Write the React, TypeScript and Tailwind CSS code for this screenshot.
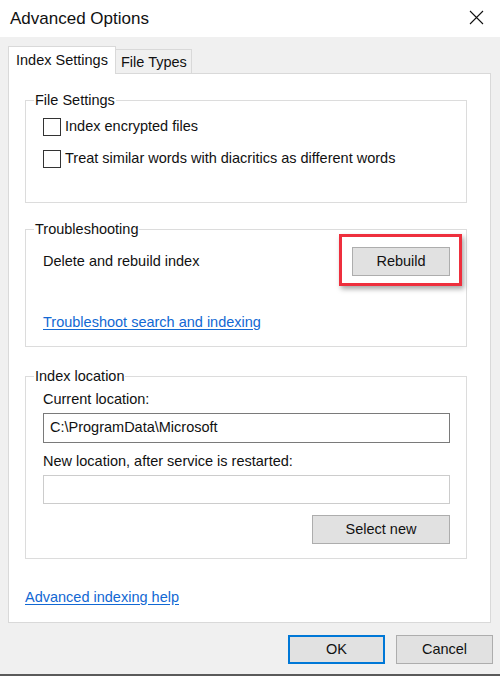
import type { ReactNode } from 'react'

const font = { fontFamily: '"Liberation Sans", Arial, sans-serif' }

const Group = ({ title, children }: { title: string; children: ReactNode }) => {
    return (
        <fieldset className="w-[442px] border border-[#dcdcdc] p-0 m-0">
            <legend className="ml-[8px] px-[1px] leading-[18px] text-[14.5px] text-[#111]">{title}</legend>
            <div className="pl-[17px] pr-[16px]">{children}</div>
        </fieldset>
    )
}

const Check = ({ label }: { label: string }) => {
    return (
        <label className="flex items-center h-[22px] gap-[4px]">
            <span className="w-[18px] h-[18px] border border-[#333] bg-white shrink-0" />
            <span className="text-[14.5px] text-[#111]">{label}</span>
        </label>
    )
}

const WinButton = ({ label, className = '' }: { label: string; className?: string }) => {
    return (
        <button className={`w-[98px] h-[29px] bg-[#e1e1e1] border border-[#adadad] text-[14.5px] text-[#111] ${className}`}>
            {label}
        </button>
    )
}

export default function App() {
    return (
        <div style={font} className="w-[500px] h-[676px] bg-[#f0f0f0] flex flex-col border-b-2 border-[#5a5a5a] overflow-hidden">
            {/* title bar */}
            <div className="h-[37px] bg-white flex items-center justify-between pl-[10px] pr-[16px] shrink-0">
                <span className="text-[17px] text-[#111]">Advanced Options</span>
                <svg width="15" height="15" viewBox="0 0 15 15" className="mt-[-2px]">
                    <path d="M1 1 L14 14 M14 1 L1 14" stroke="#111" strokeWidth="1.1" fill="none" />
                </svg>
            </div>

            <div className="pl-[8px] pr-[9px] pt-[9px]">
                {/* tabs */}
                <div className="flex items-end h-[27px]">
                    <div className="relative z-10 w-[108px] h-[28px] -mb-px bg-white border-t border-l border-r border-[#d9d9d9] flex items-center pl-[7px] text-[14.5px] text-[#111]">
                        Index Settings
                    </div>
                    <div className="w-[76px] h-[24px] bg-[#f0f0f0] border-t border-r border-[#d9d9d9] flex items-center pl-[5px] pt-[2px] text-[14.5px] text-[#111]">
                        File Types
                    </div>
                </div>

                {/* panel */}
                <div className="h-[550px] bg-white border border-[#d9d9d9] pl-[16px] flex flex-col">
                    <div className="mt-[17px]">
                        <Group title="File Settings">
                            <div className="pt-[7px] pb-[32px] flex flex-col gap-[10px]">
                                <Check label="Index encrypted files" />
                                <Check label="Treat similar words with diacritics as different words" />
                            </div>
                        </Group>
                    </div>

                    <div className="mt-[17px]">
                        <Group title="Troubleshooting">
                            <div className="pt-[9px] pb-[13px]">
                                <div className="flex items-center justify-between h-[29px]">
                                    <span className="text-[14.5px] text-[#111]">Delete and rebuild index</span>
                                    <div className="relative">
                                        <span className="absolute -left-[13px] -right-[12px] -top-[13px] -bottom-[10px] border-[3px] border-[#ee2f3d] shadow-[2px_3px_5px_rgba(0,0,0,0.35)]" />
                                        <WinButton label="Rebuild" />
                                    </div>
                                </div>
                                <div className="mt-[37px] h-[20px] flex items-center">
                                    <a className="text-[14.5px] text-[#1268d3] underline underline-offset-2">Troubleshoot search and indexing</a>
                                </div>
                            </div>
                        </Group>
                    </div>

                    <div className="mt-[20px]">
                        <Group title="Index location">
                            <div className="pt-[6px] pb-[14px] flex flex-col">
                                <div className="h-[18px] flex items-center text-[14.5px] text-[#111]">Current location:</div>
                                <div className="mt-[4px] h-[30px] border border-[#7a7a7a] flex items-center pl-[6px] text-[14.5px] text-[#111]">
                                    C:\ProgramData\Microsoft
                                </div>
                                <div className="mt-[10px] h-[18px] flex items-center text-[14.5px] text-[#111]">
                                    New location, after service is restarted:
                                </div>
                                <div className="mt-[4px] h-[29px] border border-[#cccccc]" />
                                <div className="mt-[11px] flex justify-end">
                                    <WinButton label="Select new" className="w-[138px]" />
                                </div>
                            </div>
                        </Group>
                    </div>

                    <div className="mt-[30px] h-[18px] flex items-center">
                        <a className="text-[14.5px] text-[#1268d3] underline underline-offset-2">Advanced indexing help</a>
                    </div>
                </div>
            </div>

            {/* footer buttons */}
            <div className="mt-[12px] flex justify-end gap-[11px] pr-[7px]">
                <button className="w-[97px] h-[29px] bg-[#e1e1e1] border-2 border-[#0078d7] text-[14.5px] text-[#111]">OK</button>
                <button className="w-[97px] h-[29px] bg-[#e1e1e1] border border-[#adadad] text-[14.5px] text-[#111]">Cancel</button>
            </div>
        </div>
    )
}
